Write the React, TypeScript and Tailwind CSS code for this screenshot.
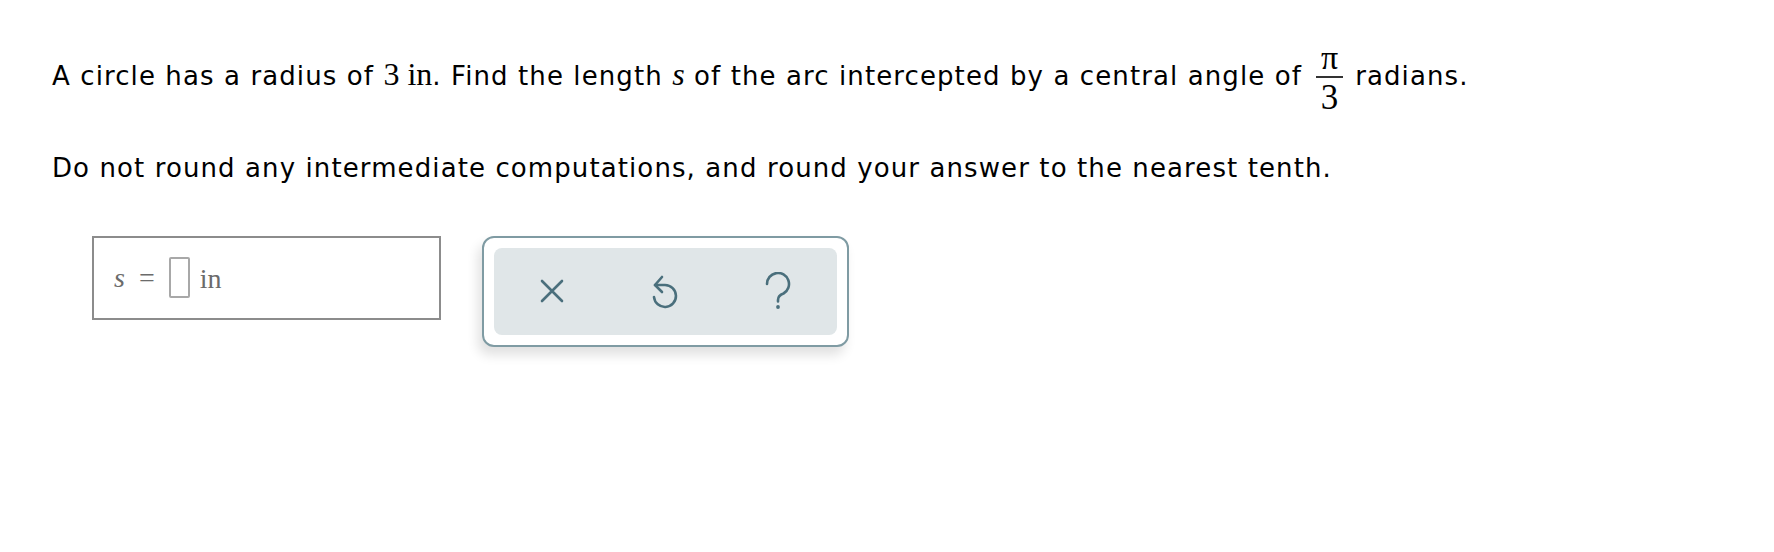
import React from "react";

const sans = { fontFamily: '"DejaVu Sans", Verdana, sans-serif' };

const Frac = () => (
  <span className="inline-flex flex-col items-center align-middle ml-[14px] mr-[12px] relative top-[1px] tracking-normal">
    <span className="font-['Liberation_Serif',serif] text-[34px] leading-[36px] px-[5px]">π</span>
    <span className="block w-full h-[2px] bg-[#333]" />
    <span className="font-['Liberation_Serif',serif] text-[35px] leading-[40px]">3</span>
  </span>
);

const ActionPanel = () => (
  <div className="w-[367px] h-[111px] rounded-[12px] border-2 border-[#7f9ba3] bg-white p-[10px] shadow-[-4px_8px_12px_rgba(0,0,0,0.12)]">
    <div className="h-full rounded-[8px] bg-[#e0e6e8] flex items-center gap-[73px] pl-[38px] text-[#4a6f7c]">
      <button className="w-[40px] h-[40px] flex items-center justify-center">
        <svg width="24" height="24" viewBox="0 0 24 24" fill="none" stroke="currentColor" strokeWidth="2.6" strokeLinecap="round">
          <path d="M2 2L22 22M22 2L2 22" />
        </svg>
      </button>
      <button className="w-[40px] h-[40px] flex items-center justify-center">
        <svg width="28" height="38" viewBox="0 0 28 38" fill="none" stroke="currentColor" strokeWidth="2.6" strokeLinecap="round" strokeLinejoin="round">
          <path d="M4 13H14A11 11 0 1 1 3 25" />
          <path d="M11 5L4 13L11 20" />
        </svg>
      </button>
      <button className="w-[40px] h-[40px] flex items-center justify-center">
        <svg width="28" height="38" viewBox="0 0 28 38" fill="none" stroke="currentColor" strokeWidth="2.6" strokeLinecap="round">
          <path d="M3 12A11 11 0 1 1 19.5 21.5Q14 23.5 14 28V29.5" />
          <circle cx="14" cy="35" r="1.9" fill="currentColor" stroke="none" />
        </svg>
      </button>
    </div>
  </div>
);

export default function App() {
  return (
    <div className="min-h-[552px] bg-white text-black pl-[52px] pt-[38px]" style={sans}>
      <p className="text-[26px] tracking-[1.1px] leading-[72px] whitespace-nowrap">
        A circle has a radius of{" "}
        <span className="font-['Liberation_Serif',serif] text-[32px] tracking-normal">3 in</span>. Find the length{" "}
        <span className="font-['Liberation_Serif',serif] italic text-[32px] tracking-normal">s</span> of the arc intercepted by a central angle of
        <Frac />
        radians.
      </p>
      <p className="text-[26px] tracking-[1.1px] leading-[32px] mt-[35px] whitespace-nowrap">
        Do not round any intermediate computations, and round your answer to the nearest tenth.
      </p>

      <div className="flex items-start gap-[41px] mt-[52px] ml-[40px]">
        <div className="w-[349px] h-[84px] border-2 border-[#8c8c8c] flex items-center pl-[20px] text-[#6b6b6b] font-['Liberation_Serif',serif] text-[28px]">
          <span className="italic">s</span>
          <span className="mx-[14px]">=</span>
          <span className="inline-block w-[21px] h-[41px] border-2 border-[#a8a8a8] rounded-[2px]" />
          <span className="ml-[10px] relative top-[1px]">in</span>
        </div>
        <ActionPanel />
      </div>
    </div>
  );
}
